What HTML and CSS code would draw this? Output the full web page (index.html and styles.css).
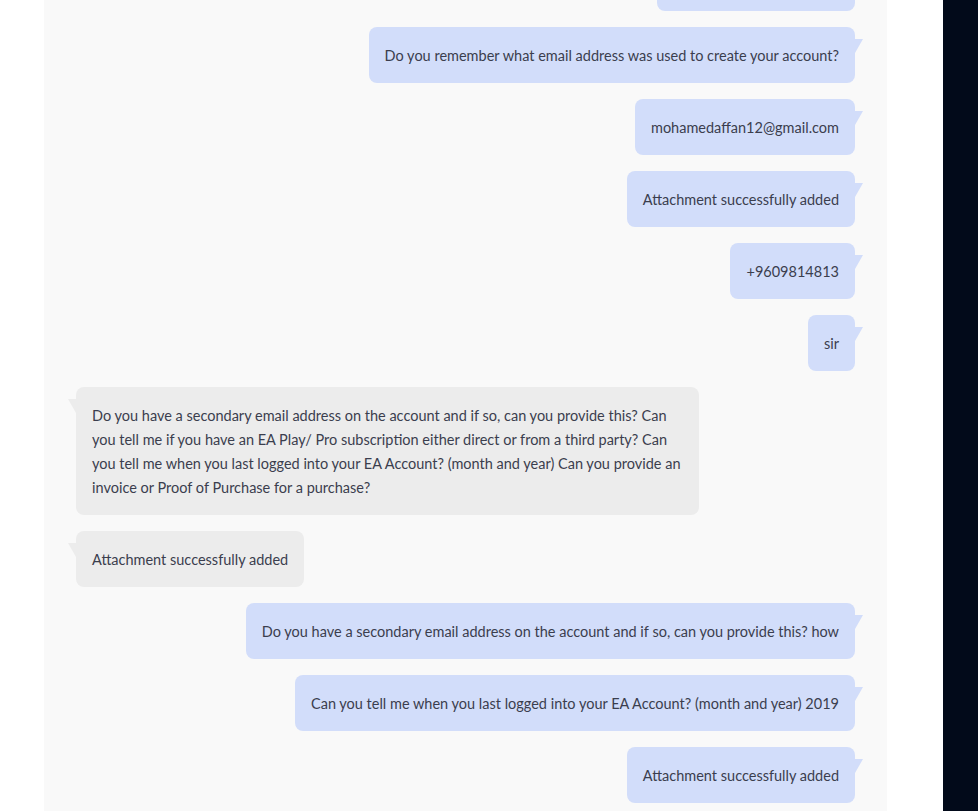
FILE: index.html
```html
<!DOCTYPE html>
<html>
<head>
<meta charset="utf-8">
<link rel="stylesheet" href="styles.css">
</head>
<body>
<div class="page">
  <div class="gutter"></div>
  <main class="chat">
    <div class="messages">
      <div class="msg user"><div class="bubble">Yes, I still have access to it</div></div>
      <div class="msg user"><div class="bubble">Do you remember what email address was used to create your account?</div></div>
      <div class="msg user"><div class="bubble">mohamedaffan12@gmail.com</div></div>
      <div class="msg user"><div class="bubble">Attachment successfully added</div></div>
      <div class="msg user"><div class="bubble">+9609814813</div></div>
      <div class="msg user"><div class="bubble">sir</div></div>
      <div class="msg agent"><div class="bubble">Do you have a secondary email address on the account and if so, can you provide this? Can you tell me if you have an EA Play/ Pro subscription either direct or from a third party? Can you tell me when you last logged into your EA Account? (month and year) Can you provide an invoice or Proof of Purchase for a purchase?</div></div>
      <div class="msg agent"><div class="bubble">Attachment successfully added</div></div>
      <div class="msg user"><div class="bubble">Do you have a secondary email address on the account and if so, can you provide this? how</div></div>
      <div class="msg user"><div class="bubble">Can you tell me when you last logged into your EA Account? (month and year) 2019</div></div>
      <div class="msg user"><div class="bubble">Attachment successfully added</div></div>
    </div>
  </main>
  <div class="spacer"></div>
  <aside class="dark"></aside>
</div>
</body>
</html>
```
FILE: styles.css
```css
html, body {
  margin: 0;
  padding: 0;
  height: 100%;
  overflow: hidden;
  background: #ffffff;
}
.page {
  display: flex;
  height: 811px;
  font-family: Lato, "Noto Sans", sans-serif;
  font-size: 14.5px;
  line-height: 24px;
  color: #3b3e4e;
}
.gutter {
  width: 44px;
  flex: none;
}
.chat {
  width: 843px;
  flex: none;
  background: #f9f9f9;
  overflow: hidden;
}
.messages {
  display: flex;
  flex-direction: column;
  gap: 16px;
  padding: 0 32px;
  margin-top: -45px;
}
.msg {
  display: flex;
}
.msg.user {
  justify-content: flex-end;
}
.msg.agent {
  justify-content: flex-start;
}
.bubble {
  position: relative;
  max-width: 80%;
  box-sizing: border-box;
  padding: 17px 16px 15px;
  border-radius: 8px;
}
.user .bubble {
  background: #d2ddfa;
}
.agent .bubble {
  background: #ececec;
}
.bubble::after {
  content: "";
  position: absolute;
  top: 12px;
  width: 8px;
  height: 14px;
}
.user .bubble::after {
  right: -8px;
  background: #d2ddfa;
  clip-path: polygon(0 0, 100% 0, 0 100%);
}
.agent .bubble::after {
  left: -8px;
  background: #ececec;
  clip-path: polygon(0 0, 100% 0, 100% 100%);
}
.spacer {
  width: 56px;
  flex: none;
}
.dark {
  flex: 1;
  background: #020a1a;
}
```
